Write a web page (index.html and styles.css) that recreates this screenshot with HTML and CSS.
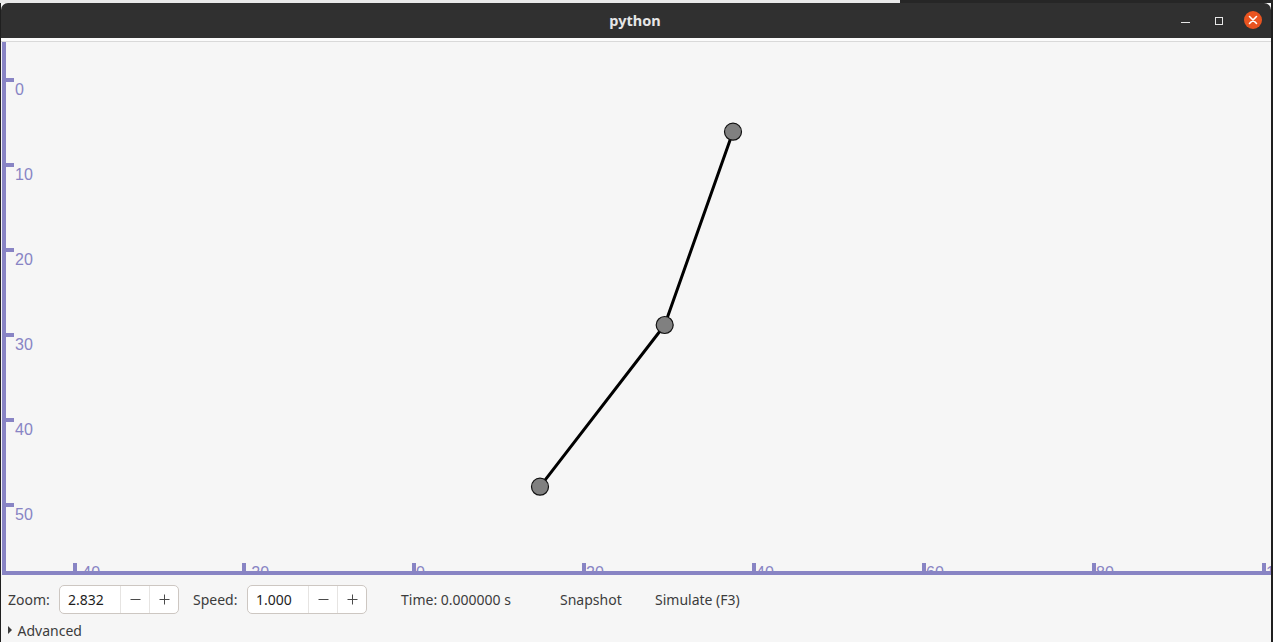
FILE: index.html
```html
<!DOCTYPE html>
<html>
<head>
<meta charset="utf-8">
<title>python</title>
<link rel="stylesheet" href="styles.css">
</head>
<body>
<div class="desk-strip"><div class="desk-light"></div><div class="desk-dark"></div></div>
<div class="window">
  <header class="titlebar">
    <div class="tb-left"></div>
    <div class="tb-title">python</div>
    <div class="tb-controls">
      <span class="ctl-min"></span>
      <span class="ctl-max"></span>
      <span class="ctl-close">
        <svg width="18" height="18" viewBox="0 0 18 18"><path d="M5.5 5.5 L12.5 12.5 M12.5 5.5 L5.5 12.5" stroke="#ffffff" stroke-width="1.6" stroke-linecap="round"/></svg>
      </span>
    </div>
  </header>
  <div class="sep"></div>
  <main class="canvas">
    <svg class="plot" width="1270" height="533" viewBox="0 0 1270 533">
      <g class="axis-label">
        <text x="14" y="53">0</text>
        <text x="14" y="138">10</text>
        <text x="14" y="223">20</text>
        <text x="14" y="308">30</text>
        <text x="14" y="393">40</text>
        <text x="14" y="478">50</text>
        <text x="76" y="535.5">-40</text>
        <text x="245" y="535.5">-20</text>
        <text x="415" y="535.5">0</text>
        <text x="585" y="535.5">20</text>
        <text x="755" y="535.5">40</text>
        <text x="925" y="535.5">60</text>
        <text x="1095" y="535.5">80</text>
        <text x="1265" y="535.5">100</text>
      </g>
      <g class="axis">
        <rect x="1" y="0" width="4" height="533"/>
        <rect x="1" y="529" width="1269" height="4"/>
        <rect x="5" y="36" width="8" height="4"/>
        <rect x="5" y="121" width="8" height="4"/>
        <rect x="5" y="206" width="8" height="4"/>
        <rect x="5" y="291" width="8" height="4"/>
        <rect x="5" y="376" width="8" height="4"/>
        <rect x="5" y="461" width="8" height="4"/>
        <rect x="72" y="521" width="4" height="8"/>
        <rect x="241" y="521" width="4" height="8"/>
        <rect x="411" y="521" width="4" height="8"/>
        <rect x="581" y="521" width="4" height="8"/>
        <rect x="751" y="521" width="4" height="8"/>
        <rect x="921" y="521" width="4" height="8"/>
        <rect x="1091" y="521" width="4" height="8"/>
        <rect x="1261" y="521" width="4" height="8"/>
      </g>
      <polyline class="link" points="732,89.7 663.7,283 539,444.7"/>
      <circle class="node" cx="732" cy="89.7" r="8.5"/>
      <circle class="node" cx="663.7" cy="283" r="8.5"/>
      <circle class="node" cx="539" cy="444.7" r="8.5"/>
    </svg>
  </main>
  <footer class="toolbar">
    <div class="row">
      <span class="lbl lbl-zoom">Zoom:</span>
      <div class="spin">
        <span class="spin-entry">2.832</span>
        <span class="spin-btn"><svg width="11" height="11" viewBox="0 0 11 11"><path d="M0.5 5.5 H10.5" stroke="#4a4a4a" stroke-width="1"/></svg></span>
        <span class="spin-btn"><svg width="11" height="11" viewBox="0 0 11 11"><path d="M0.5 5.5 H10.5 M5.5 0.5 V10.5" stroke="#4a4a4a" stroke-width="1"/></svg></span>
      </div>
      <span class="lbl lbl-speed">Speed:</span>
      <div class="spin">
        <span class="spin-entry">1.000</span>
        <span class="spin-btn"><svg width="11" height="11" viewBox="0 0 11 11"><path d="M0.5 5.5 H10.5" stroke="#4a4a4a" stroke-width="1"/></svg></span>
        <span class="spin-btn"><svg width="11" height="11" viewBox="0 0 11 11"><path d="M0.5 5.5 H10.5 M5.5 0.5 V10.5" stroke="#4a4a4a" stroke-width="1"/></svg></span>
      </div>
      <span class="lbl lbl-time">Time: 0.000000 s</span>
      <span class="lbl lbl-snap">Snapshot</span>
      <span class="lbl">Simulate (F3)</span>
    </div>
    <div class="row advanced">
      <span class="tri"></span>
      <span class="lbl">Advanced</span>
    </div>
  </footer>
</div>
</body>
</html>
```
FILE: styles.css
```css
html, body {
  margin: 0;
  padding: 0;
}
body {
  width: 1273px;
  height: 642px;
  overflow: hidden;
  background: #1f1f1f;
  font-family: "Noto Sans", "Open Sans", sans-serif;
}
.desk-strip {
  display: flex;
  height: 3px;
}
.desk-light {
  width: 900px;
  background: #e9e9e9;
}
.desk-dark {
  flex: 1;
  background: #262626;
}
.window {
  margin-left: 1px;
  width: 1270px;
  height: 639px;
  display: flex;
  flex-direction: column;
  background: #f6f6f6;
}
.titlebar {
  height: 35px;
  flex: none;
  background: #303030;
  border-radius: 7px 7px 0 0;
  display: grid;
  grid-template-columns: 1fr auto 1fr;
  align-items: center;
}
.tb-title {
  color: #e6e6e6;
  font-weight: 700;
  font-size: 14.5px;
  margin-left: -2px;
  line-height: 35px;
}
.tb-controls {
  display: flex;
  justify-content: flex-end;
  align-items: center;
  padding-right: 9px;
}
.ctl-min {
  width: 9px;
  height: 0;
  border-top: 1.5px solid #e6e6e6;
  margin-top: 4px;
  margin-right: 25px;
}
.ctl-max {
  width: 6px;
  height: 6px;
  border: 1.3px solid #e6e6e6;
  margin-right: 21px;
}
.ctl-close {
  width: 18px;
  height: 18px;
  border-radius: 50%;
  background: #e95420;
  display: flex;
  margin-top: -1px;
}
.ctl-close svg {
  display: block;
}
.sep {
  height: 3px;
  flex: none;
  background: #fbfbfb;
  border-bottom: 1px solid #d9d9d9;
}
.canvas {
  height: 533px;
  flex: none;
  background: #f6f6f6;
}
.plot {
  display: block;
  overflow: hidden;
}
.axis rect {
  fill: #8884c4;
}
.axis-label text {
  fill: #8884c4;
  font-family: "Liberation Sans", sans-serif;
  font-size: 16px;
}
.link {
  fill: none;
  stroke: #000000;
  stroke-width: 3;
  stroke-linejoin: round;
}
.node {
  fill: #808080;
  stroke: #111111;
  stroke-width: 1.2;
}
.toolbar {
  flex: 1;
  background: #f6f6f6;
  padding: 10px 0 0 7px;
  color: #3c3c3c;
  font-size: 14px;
}
.row {
  display: flex;
  align-items: center;
  height: 29px;
}
.lbl {
  white-space: nowrap;
}
.lbl-zoom {
  width: 51px;
}
.lbl-speed {
  margin-left: 14px;
  width: 54px;
}
.lbl-time {
  margin-left: 34px;
  width: 159px;
}
.lbl-snap {
  width: 95px;
}
.spin {
  display: flex;
  width: 120px;
  height: 29px;
  box-sizing: border-box;
  border: 1px solid #cdc7c2;
  border-radius: 5px;
  background: #ffffff;
}
.spin-entry {
  width: 60px;
  box-sizing: border-box;
  padding-left: 8px;
  line-height: 27px;
  color: #1e1e1e;
}
.spin-btn {
  flex: 1;
  border-left: 1px solid #e6e4e2;
  display: flex;
  align-items: center;
  justify-content: center;
}
.spin-btn svg {
  display: block;
}
.advanced {
  margin-top: 2px;
  height: 28px;
}
.tri {
  width: 0;
  height: 0;
  border-top: 4px solid transparent;
  border-bottom: 4px solid transparent;
  border-left: 4.5px solid #3c3c3c;
  margin-right: 5.5px;
}
```
